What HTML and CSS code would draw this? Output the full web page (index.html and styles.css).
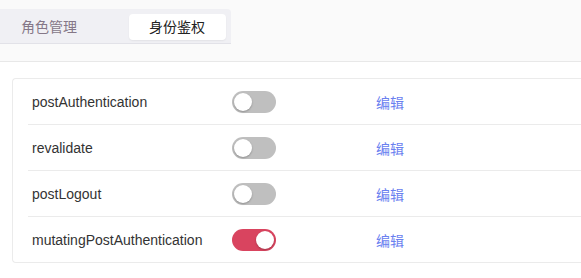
FILE: index.html
```html
<!DOCTYPE html>
<html lang="zh">
<head>
<meta charset="utf-8">
<link rel="stylesheet" href="styles.css">
</head>
<body>
<div class="header">
  <div class="tabs">
    <div class="tab">角色管理</div>
    <div class="tab active">身份鉴权</div>
  </div>
</div>
<div class="content">
  <div class="card">
    <div class="row">
      <span class="label">postAuthentication</span>
      <span class="switch"><span class="knob"></span></span>
      <a class="edit">编辑</a>
    </div>
    <div class="row">
      <span class="label">revalidate</span>
      <span class="switch"><span class="knob"></span></span>
      <a class="edit">编辑</a>
    </div>
    <div class="row">
      <span class="label">postLogout</span>
      <span class="switch"><span class="knob"></span></span>
      <a class="edit">编辑</a>
    </div>
    <div class="row last">
      <span class="label">mutatingPostAuthentication</span>
      <span class="switch on"><span class="knob"></span></span>
      <a class="edit">编辑</a>
    </div>
  </div>
</div>
</body>
</html>
```
FILE: styles.css
```css
html, body {
  margin: 0;
  padding: 0;
  background: #fff;
  font-family: "Liberation Sans", "Noto Sans CJK SC", sans-serif;
  font-size: 14px;
  color: #333;
}
.header {
  background: #fafafa;
  height: 52px;
  padding-top: 9px;
  border-bottom: 1px solid #e8e8e8;
}
.tabs {
  display: inline-flex;
  gap: 32px;
  background: #f0f0f4;
  padding: 5px 5px 3px 1px;
  border-bottom: 1px solid #e2e2e8;
  border-top-right-radius: 4px;
}
.tab {
  height: 26px;
  line-height: 26px;
  padding: 0 20px;
  color: #857787;
  border-radius: 4px;
}
.tab.active {
  background: #fff;
  color: #222;
  padding: 0 21px 0 20px;
  box-shadow: 0 1px 2px rgba(0,0,0,0.06);
}
.content {
  padding: 16px 0 0 12px;
}
.card {
  border: 1px solid #ebebeb;
  border-right: none;
  border-radius: 4px 0 0 4px;
  padding-left: 15px;
}
.row {
  display: grid;
  grid-template-columns: 200px 144px auto;
  align-items: center;
  height: 45px;
  padding-left: 4px;
  border-bottom: 1px solid #ebebeb;
  color: #333;
}
.row.last {
  border-bottom: none;
}
.switch {
  position: relative;
  display: block;
  width: 44px;
  height: 22px;
  border-radius: 11px;
  background: #bfbfbf;
}
.switch .knob {
  position: absolute;
  top: 2px;
  left: 2px;
  width: 18px;
  height: 18px;
  border-radius: 50%;
  background: #fff;
  box-shadow: 0 1px 2px rgba(0,0,0,0.25);
}
.switch.on {
  background: #d9445f;
}
.switch.on .knob {
  left: 24px;
}
.edit {
  color: #6a80f0;
  cursor: pointer;
}
```
